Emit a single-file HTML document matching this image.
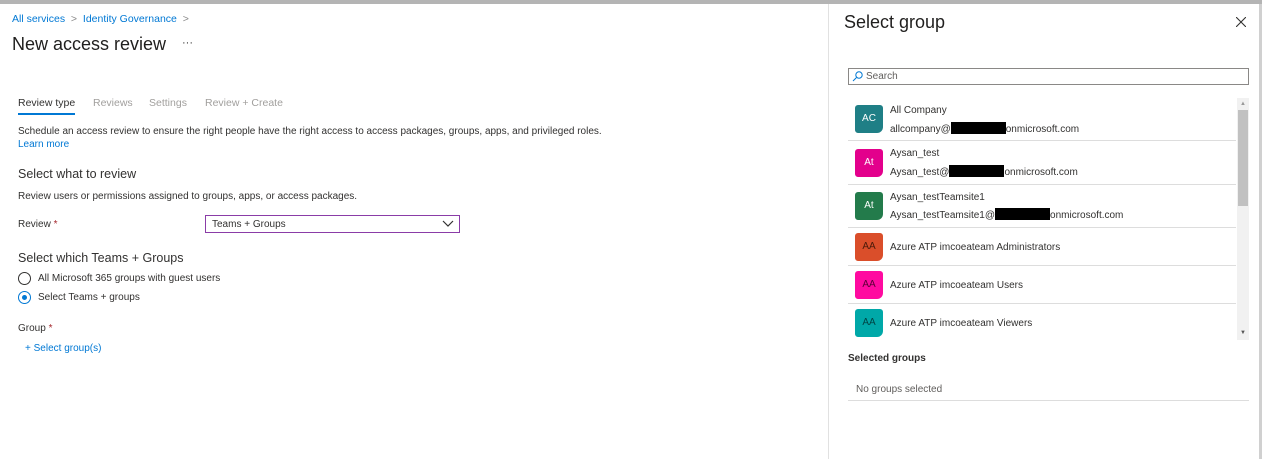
<!DOCTYPE html>
<html><head><style>
*{margin:0;padding:0;box-sizing:border-box}
body{width:1262px;height:459px;overflow:hidden;background:#fff;font-family:"Liberation Sans",sans-serif;color:#323130;position:relative;font-size:11px}
.a{position:absolute;white-space:nowrap}
.blue{color:#0078d4}
.av{position:absolute;left:855px;width:28px;height:28px;border-radius:3px 3px 6px 3px;color:#fff;font-size:10px;text-align:center;line-height:28px}
.sep{position:absolute;left:848px;width:388px;height:1px;background:#ddd}
</style></head><body>
<div class="a" style="left:0;top:0;width:1262px;height:4px;background:#b4b4b4"></div>
<div class="a blue" style="left:12px;top:13px;font-size:10.5px">All services <span style="color:#888">&nbsp;&gt;&nbsp;</span> Identity Governance <span style="color:#888">&nbsp;&gt;</span></div>
<div class="a" style="left:12px;top:34px;font-size:18px;color:#201f1e">New access review</div>
<div class="a" style="left:182px;top:37px;font-size:11px">···</div>
<div class="a" style="left:18px;top:97px;color:#323130;font-size:10.5px">Review type</div>
<div class="a" style="left:18px;top:113px;width:57px;height:2px;background:#0078d4"></div>
<div class="a" style="left:93px;top:97px;color:#a19f9d;font-size:10.5px">Reviews</div>
<div class="a" style="left:149px;top:97px;color:#a19f9d;font-size:10.5px">Settings</div>
<div class="a" style="left:205px;top:97px;color:#a19f9d;font-size:10.5px">Review + Create</div>
<div class="a" style="left:18px;top:126px;font-size:10px">Schedule an access review to ensure the right people have the right access to access packages, groups, apps, and privileged roles.</div>
<div class="a blue" style="left:18px;top:139px;font-size:10px">Learn more</div>
<div class="a" style="left:18px;top:167px;font-size:12.5px">Select what to review</div>
<div class="a" style="left:18px;top:191px;font-size:10px">Review users or permissions assigned to groups, apps, or access packages.</div>
<div class="a" style="left:18px;top:219px;font-size:10px">Review <span style="color:#a4262c">*</span></div>
<div class="a" style="left:205px;top:215px;width:255px;height:18px;border:1px solid #8a3ca7"></div>
<div class="a" style="left:212px;top:219px;font-size:10px">Teams + Groups</div>
<svg class="a" style="left:442px;top:220px" width="12" height="8"><path d="M1 1 L6 6 L11 1" fill="none" stroke="#323130" stroke-width="1.2"/></svg>
<div class="a" style="left:18px;top:251px;font-size:12.5px">Select which Teams + Groups</div>
<div class="a" style="left:18px;top:272px;width:13px;height:13px;border:1px solid #323130;border-radius:50%"></div>
<div class="a" style="left:38px;top:273px;font-size:10px">All Microsoft 365 groups with guest users</div>
<div class="a" style="left:18px;top:291px;width:13px;height:13px;border:1px solid #0078d4;border-radius:50%"></div>
<div class="a" style="left:22px;top:295px;width:5px;height:5px;background:#0078d4;border-radius:50%"></div>
<div class="a" style="left:38px;top:292px;font-size:10px">Select Teams + groups</div>
<div class="a" style="left:18px;top:323px;font-size:10px">Group <span style="color:#a4262c">*</span></div>
<div class="a blue" style="left:25px;top:343px;font-size:10px">+ Select group(s)</div>

<div class="a" style="left:828px;top:4px;width:1px;height:455px;background:#e1e1e1"></div>
<div class="a" style="left:1259px;top:4px;width:3px;height:455px;background:#d0d0d0"></div>
<div class="a" style="left:844px;top:12px;font-size:18px;color:#201f1e">Select group</div>
<svg class="a" style="left:1236px;top:17px" width="10" height="10"><path d="M0 0L10 10M10 0L0 10" stroke="#323130" stroke-width="1.1"/></svg>
<div class="a" style="left:848px;top:68px;width:401px;height:17px;border:1px solid #8a8886"></div>
<svg class="a" style="left:852px;top:71px" width="11" height="11"><circle cx="7" cy="4" r="3.2" fill="none" stroke="#0078d4"/><path d="M4.5 6.5L1 10" stroke="#0078d4"/></svg>
<div class="a" style="left:866px;top:71px;font-size:10px;color:#605e5c">Search</div>
<div class="a" style="left:1237px;top:98px;width:12px;height:242px;background:#f1f1f1"></div>
<div class="a" style="left:1238px;top:110px;width:10px;height:96px;background:#c1c1c1"></div>
<div class="a" style="left:1240px;top:101px;font-size:6px;color:#999">▲</div>
<div class="a" style="left:1240px;top:330px;font-size:6px;color:#555">▼</div>

<div class="av" style="top:105px;background:#1f7f86">AC</div>
<div class="a" style="left:890px;top:105px;font-size:10px">All Company</div>
<div class="a" style="left:890px;top:122px;font-size:10px">allcompany@<span style="display:inline-block;width:55px;height:12px;background:#000;vertical-align:-2px"></span>onmicrosoft.com</div>
<div class="sep" style="top:140px"></div>
<div class="av" style="top:149px;background:#e3008c">At</div>
<div class="a" style="left:890px;top:148px;font-size:10px">Aysan_test</div>
<div class="a" style="left:890px;top:165px;font-size:10px">Aysan_test@<span style="display:inline-block;width:55px;height:12px;background:#000;vertical-align:-2px"></span>onmicrosoft.com</div>
<div class="sep" style="top:184px"></div>
<div class="av" style="top:192px;background:#237b4b">At</div>
<div class="a" style="left:890px;top:192px;font-size:10px">Aysan_testTeamsite1</div>
<div class="a" style="left:890px;top:208px;font-size:10px">Aysan_testTeamsite1@<span style="display:inline-block;width:55px;height:12px;background:#000;vertical-align:-2px"></span>onmicrosoft.com</div>
<div class="sep" style="top:227px"></div>
<div class="av" style="top:233px;background:#da4e2a;color:#4a1a0a">AA</div>
<div class="a" style="left:890px;top:242px;font-size:10px">Azure ATP imcoeateam Administrators</div>
<div class="sep" style="top:265px"></div>
<div class="av" style="top:271px;background:#ff0aa0;color:#5a0037">AA</div>
<div class="a" style="left:890px;top:280px;font-size:10px">Azure ATP imcoeateam Users</div>
<div class="sep" style="top:303px"></div>
<div class="av" style="top:309px;background:#00a8a8;color:#004444">AA</div>
<div class="a" style="left:890px;top:318px;font-size:10px">Azure ATP imcoeateam Viewers</div>

<div class="a" style="left:848px;top:353px;font-size:10px;font-weight:bold">Selected groups</div>
<div class="a" style="left:856px;top:384px;font-size:10px;color:#605e5c">No groups selected</div>
<div class="a" style="left:848px;top:400px;width:401px;height:1px;background:#ddd"></div>
</body></html>
